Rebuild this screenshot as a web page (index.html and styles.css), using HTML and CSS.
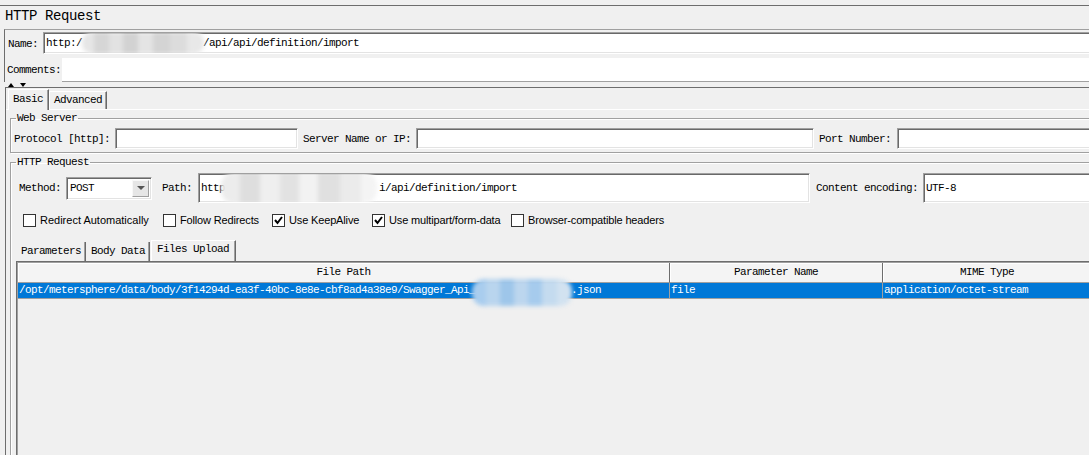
FILE: index.html
```html
<!DOCTYPE html>
<html>
<head>
<meta charset="utf-8">
<link rel="stylesheet" href="styles.css">
</head>
<body>
<div class="app">
  <div class="title">HTTP Request</div>
  <div class="namebox">
    <div class="name-row">
      <span class="lbl">Name:</span>
      <div class="field name-field">http:/<span class="mask m-name"></span>/api/api/definition/import<div class="blur blur-name"></div></div>
    </div>
    <div class="comments-row">
      <span class="lbl">Comments:</span>
      <div class="comments-field"></div>
    </div>
  </div>
  <div class="divider"><span class="arr-up"></span><span class="arr-down"></span></div>
  <div class="tabpane">
    <div class="tabs">
      <div class="tab sel">Basic</div>
      <div class="tab">Advanced</div>
    </div>
    <div class="tabbody">
      <fieldset class="group ws">
        <legend>Web Server</legend>
        <div class="ws-row">
          <span class="lbl">Protocol [http]:</span>
          <div class="field f-proto"></div>
          <span class="lbl">Server Name or IP:</span>
          <div class="field f-server"></div>
          <span class="lbl">Port Number:</span>
          <div class="field f-port"></div>
        </div>
      </fieldset>
      <fieldset class="group hr">
        <legend>HTTP Request</legend>
        <div class="method-row">
          <span class="lbl">Method:</span>
          <div class="combo"><span class="combo-val">POST</span><span class="combo-btn"><span class="tri"></span></span></div>
          <span class="lbl l-path">Path:</span>
          <div class="field f-path">http<span class="mask m-path"></span>i/api/definition/import<div class="blur blur-path"></div></div>
          <span class="lbl l-enc">Content encoding:</span>
          <div class="field f-enc">UTF-8</div>
        </div>
        <div class="checks">
          <label class="chk k1"><span class="box"></span>Redirect Automatically</label>
          <label class="chk k2"><span class="box"></span>Follow Redirects</label>
          <label class="chk k3"><span class="box on"><svg width="11" height="11" viewBox="0 0 11 11"><polyline points="2,5 4.5,8 9,2" fill="none" stroke="#000" stroke-width="2"/></svg></span>Use KeepAlive</label>
          <label class="chk k4"><span class="box on"><svg width="11" height="11" viewBox="0 0 11 11"><polyline points="2,5 4.5,8 9,2" fill="none" stroke="#000" stroke-width="2"/></svg></span>Use multipart/form-data</label>
          <label class="chk k5"><span class="box"></span>Browser-compatible headers</label>
        </div>
        <div class="subtabs">
          <div class="stab">Parameters</div>
          <div class="stab">Body Data</div>
          <div class="stab sel">Files Upload</div>
        </div>
        <div class="table">
          <div class="thead">
            <div class="th c1">File Path</div>
            <div class="th c2">Parameter Name</div>
            <div class="th c3">MIME Type</div>
          </div>
          <div class="trow">
            <div class="td c1">/opt/metersphere/data/body/3f14294d-ea3f-40bc-8e8e-cbf8ad4a38e9/Swagger_Api_<span class="mask m-file"></span>.json</div>
            <div class="td c2">file</div>
            <div class="td c3">application/octet-stream</div>
          </div>
          <div class="blur blur-file"></div>
        </div>
      </fieldset>
    </div>
  </div>
</div>
</body>
</html>
```
FILE: styles.css
```css
html, body {
  margin: 0;
  padding: 0;
  background: #f0f0f0;
  overflow: hidden;
}
body {
  font-family: "Liberation Mono", monospace;
  font-size: 11px;
  letter-spacing: -0.6px;
  color: #000;
}
.app {
  width: 1110px;
  height: 455px;
  overflow: hidden;
}
.title {
  margin-top: 5px;
  border-top: 1px solid #6d6d6d;
  height: 23px;
  line-height: 20px;
  padding-left: 5px;
  font-size: 14px;
  letter-spacing: -0.4px;
}
.lbl {
  white-space: nowrap;
}
.namebox {
  margin-left: 4px;
  border-left: 1px solid #6d6d6d;
  border-top: 1px solid #a0a0a0;
}
.name-row {
  height: 28px;
  display: flex;
  align-items: center;
  padding-left: 3px;
}
.field {
  position: relative;
  background: #fff;
  box-sizing: border-box;
  border-top: 1px solid #a0a0a0;
  border-left: 1px solid #a0a0a0;
  border-bottom: 1px solid #fff;
  border-right: 1px solid #fff;
  box-shadow: inset 1px 1px 0 #696969, inset -1px -1px 0 #e3e3e3;
  padding-left: 2px;
  white-space: nowrap;
  overflow: hidden;
}
.name-field {
  margin-left: 5px;
  flex: 1;
  height: 22px;
  line-height: 20px;
  margin-top: -3px;
}
.mask {
  display: inline-block;
  vertical-align: top;
}
.m-name { width: 121px; }
.m-path { width: 154px; }
.m-file { width: 96px; }
.blur {
  position: absolute;
  filter: blur(2px);
  border-radius: 10px;
}
.blur-name {
  left: 38px;
  top: -1px;
  width: 122px;
  height: 22px;
  background: linear-gradient(90deg, #e6e6e6 0 10%, #d6d6d6 10% 22%, #e2e2e2 22% 34%, #d2d2d2 34% 46%, #e4e4e4 46% 58%, #d4d4d4 58% 72%, #dcdcdc 72% 86%, #e8e8e8 86%);
}
.comments-row {
  height: 24px;
  display: flex;
  align-items: center;
  padding-left: 2px;
}
.comments-field {
  margin-left: 1px;
  flex: 1;
  height: 24px;
  box-sizing: border-box;
  background: #fff;
  border-bottom: 1px solid #a0a0a0;
}
.divider {
  height: 5px;
  display: flex;
  align-items: center;
  padding-left: 8px;
  gap: 6px;
}
.arr-up {
  width: 0;
  height: 0;
  border-left: 3px solid transparent;
  border-right: 3px solid transparent;
  border-bottom: 4px solid #000;
}
.arr-down {
  width: 0;
  height: 0;
  border-left: 3px solid transparent;
  border-right: 3px solid transparent;
  border-top: 4px solid #000;
}
.tabpane {
  margin-left: 5px;
  border-left: 1px solid #6d6d6d;
  border-top: 1px solid #6d6d6d;
}
.tabs {
  display: flex;
  align-items: flex-end;
  padding-left: 2px;
  height: 21px;
}
.tab {
  box-sizing: border-box;
  height: 18px;
  line-height: 17px;
  padding: 0 4px;
  border-left: 1px solid #fff;
  border-top: 1px solid #fff;
  border-right: 1px solid #696969;
  box-shadow: inset -1px 0 0 #a0a0a0;
  white-space: nowrap;
}
.tab.sel {
  height: 21px;
  width: 41px;
  line-height: 18px;
  padding-left: 4px;
  margin-bottom: -1px;
  background: #f0f0f0;
  position: relative;
  z-index: 1;
}
.tabbody {
  border-top: 1px solid #fff;
  padding: 1px 0 0 4px;
}
fieldset.group {
  margin: 0;
  padding: 0;
  border: 1px solid #a0a0a0;
  box-shadow: inset 1px 1px 0 #fff, 1px 1px 0 #fff;
  min-width: 0;
}
fieldset.group legend {
  padding: 0 1px;
  margin-left: 5px;
  line-height: 14px;
  height: 14px;
}
.ws-row {
  display: flex;
  align-items: center;
  padding: 3px 0 3px 3px;
  height: 21px;
}
.ws-row .field {
  height: 21px;
  margin: 0 5px;
}
.f-proto { width: 183px; }
.f-server { width: 398px; }
.f-port { flex: 1; margin-left: 6px !important; }
fieldset.hr {
  margin-top: 2px;
  height: 400px;
}
.method-row {
  display: flex;
  align-items: center;
  margin-top: 4px;
  padding-left: 8px;
  height: 30px;
}
.combo {
  margin-left: 5px;
  width: 86px;
  height: 23px;
  box-sizing: border-box;
  background: #fff;
  border-top: 1px solid #a0a0a0;
  border-left: 1px solid #a0a0a0;
  border-bottom: 1px solid #fff;
  border-right: 1px solid #fff;
  box-shadow: inset 1px 1px 0 #696969, inset -1px -1px 0 #e3e3e3;
  display: flex;
  align-items: center;
  padding: 2px 2px 2px 3px;
}
.combo-val {
  flex: 1;
}
.combo-btn {
  width: 17px;
  height: 17px;
  background: #e6e6e6;
  border: 1px solid #f8f8f8;
  border-right-color: #a0a0a0;
  border-bottom-color: #a0a0a0;
  box-sizing: border-box;
  display: flex;
  align-items: center;
  justify-content: center;
}
.tri {
  width: 0;
  height: 0;
  border-left: 4px solid transparent;
  border-right: 4px solid transparent;
  border-top: 4px solid #555;
}
.l-path { margin-left: 10px; }
.f-path {
  margin-left: 6px;
  width: 612px;
  height: 30px;
  line-height: 28px;
}
.blur-path {
  left: 22px;
  top: -2px;
  width: 156px;
  height: 32px;
  border-radius: 14px;
  background: linear-gradient(90deg, #ececec 0 12%, #dedede 12% 25%, #efefef 25% 38%, #e2e2e2 38% 50%, #f2f2f2 50% 62%, #e0e0e0 62% 76%, #ebebeb 76% 90%, #f4f4f4 90%);
}
.l-enc { margin-left: 6px; }
.f-enc {
  margin-left: 5px;
  flex: 1;
  height: 30px;
  line-height: 28px;
}
.checks {
  display: flex;
  align-items: center;
  margin-top: 9px;
  padding-left: 12px;
  height: 16px;
  font-family: "Liberation Sans", Arial, sans-serif;
  font-size: 11px;
  letter-spacing: -0.15px;
}
.chk {
  display: flex;
  align-items: center;
  gap: 4px;
  white-space: nowrap;
}
.k1 { width: 140px; letter-spacing: 0; }
.k2 { width: 109px; }
.k3 { width: 100px; }
.k4 { width: 139px; }
.box {
  width: 13px;
  height: 13px;
  box-sizing: border-box;
  border: 1px solid #333;
  background: #fff;
  display: flex;
  align-items: center;
  justify-content: center;
  flex: none;
}
.subtabs {
  display: flex;
  align-items: flex-end;
  margin-top: 12px;
  padding-left: 5px;
  height: 21px;
}
.stab {
  box-sizing: border-box;
  height: 19px;
  line-height: 18px;
  padding: 0 4px 0 5px;
  border-right: 1px solid #696969;
  box-shadow: inset -1px 0 0 #a0a0a0;
  white-space: nowrap;
}
.stab.sel {
  height: 21px;
  line-height: 17px;
  padding: 0 6px 0 5px;
  border-left: 1px solid #fff;
  border-top: 1px solid #fff;
  margin-left: 1px;
}
.table {
  position: relative;
  margin-left: 5px;
  border-top: 1px solid #6d6d6d;
  border-left: 1px solid #6d6d6d;
  box-shadow: inset 1px 1px 0 #a0a0a0;
  height: 300px;
  overflow: hidden;
  padding: 1px 0 0 1px;
}
.thead, .trow {
  display: grid;
  grid-template-columns: 652px 213px 230px;
}
.th {
  height: 20px;
  line-height: 19px;
  text-align: center;
  box-sizing: border-box;
  background: #f4f4f4;
  border-bottom: 1px solid #a0a0a0;
  border-right: 1px solid #6d6d6d;
  box-shadow: inset 1px 1px 0 #fff;
}
.th.c3 {
  text-align: left;
  padding-left: 77px;
}
.trow {
  background: #0078d7;
  color: #fff;
}
.td {
  height: 16px;
  line-height: 15px;
  box-sizing: border-box;
  border-bottom: 1px solid #a0a0a0;
  border-right: 1px solid #a0a0a0;
  padding-left: 1px;
  white-space: nowrap;
  overflow: hidden;
}
.blur-file {
  left: 455px;
  top: 17px;
  width: 100px;
  height: 27px;
  border-radius: 12px;
  background: linear-gradient(90deg, #a9cdee 0 14%, #b9d5ee 14% 28%, #9ec6ea 28% 42%, #bcd6ee 42% 56%, #a6cbed 56% 70%, #c4dbef 70% 85%, #d2e2f0 85%);
}
```
